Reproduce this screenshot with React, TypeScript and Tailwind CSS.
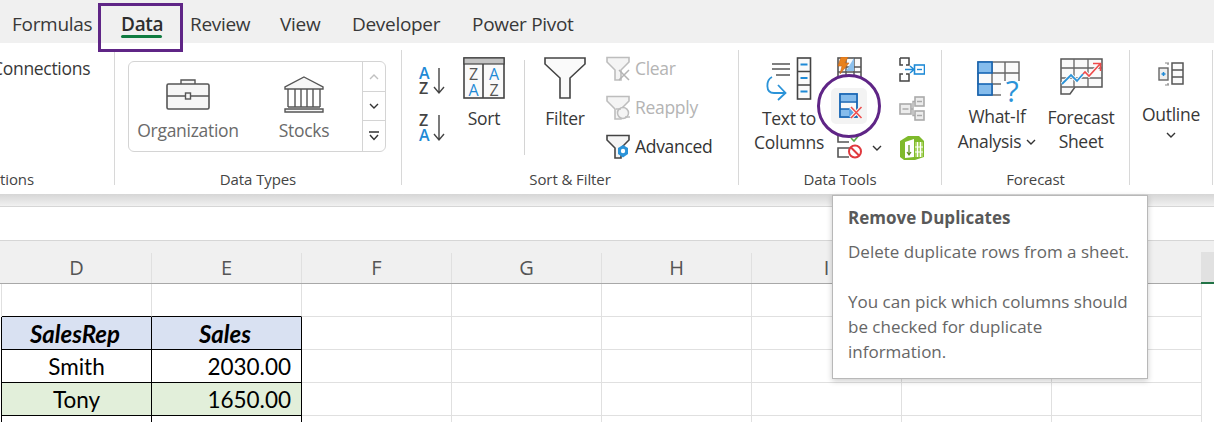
import React from "react";

const SmallFilter = ({ color = "#bdbdbd" }: { color?: string }) => (
  <path d="M1 1.5H23V6L15 14V24H9V14L1 6Z" fill="#f4f4f4" stroke={color} strokeWidth="1.6" />
);

const AZIcon = ({ flip = false }: { flip?: boolean }) => (
  <svg width="28" height="32" viewBox="0 0 28 32" className="block">
    <text x="1" y="14" fontFamily="Open Sans" fontWeight="600" fontSize="16" fill={flip ? "#444" : "#1f8ad6"}>{flip ? "Z" : "A"}</text>
    <text x="1" y="29" fontFamily="Open Sans" fontWeight="600" fontSize="16" fill={flip ? "#1f8ad6" : "#444"}>{flip ? "A" : "Z"}</text>
    <path d="M21 3V27M16 22L21 28L26 22" fill="none" stroke="#444" strokeWidth="1.4" />
  </svg>
);

const SortIcon = () => (
  <svg width="42" height="42" viewBox="0 0 42 42" className="block">
    <rect x="1" y="1" width="40" height="40" fill="#fafafa" stroke="#444" strokeWidth="1.6" />
    <rect x="1" y="1" width="40" height="6" fill="#c4c4c4" stroke="#444" strokeWidth="1.2" />
    <path d="M20 7V41" stroke="#444" strokeWidth="1.6" />
    <text x="10.5" y="23" textAnchor="middle" fontFamily="Open Sans" fontSize="16" fill="#555">Z</text>
    <text x="10.5" y="39" textAnchor="middle" fontFamily="Open Sans" fontSize="16" fill="#1f8ad6">A</text>
    <text x="31" y="23" textAnchor="middle" fontFamily="Open Sans" fontSize="16" fill="#1f8ad6">A</text>
    <text x="31" y="39" textAnchor="middle" fontFamily="Open Sans" fontSize="16" fill="#555">Z</text>
  </svg>
);

const FilterIcon = () => (
  <svg width="42" height="42" viewBox="0 0 42 42" className="block">
    <path d="M1 1H41V7L26 21V41H16V21L1 7Z" fill="#fafafa" stroke="#444" strokeWidth="1.6" />
  </svg>
);

const Small = ({ children, dim, icon }: { children: string; dim?: boolean; icon: React.ReactNode }) => (
  <div className="flex items-center h-[25px] gap-[5px]">
    <svg width="24" height="25" viewBox="0 0 24 25" className="block shrink-0">{icon}</svg>
    <span className={dim ? "text-[#b4b4b4] mt-[-1px]" : "text-[#333] mt-[-1px]"}>{children}</span>
  </div>
);

const TextToColumnsIcon = () => (
  <svg width="46" height="44" viewBox="0 0 46 44" className="block">
    <path d="M6 7H24M6 12H24M10 18H24" stroke="#555" strokeWidth="1.6" />
    <rect x="31.5" y="1" width="13" height="41" fill="#fafafa" stroke="#444" strokeWidth="1.6" />
    <path d="M31.5 14.5H44.5M31.5 28H44.5" stroke="#444" strokeWidth="1.6" />
    <path d="M34.5 7.5H41.5M34.5 21H41.5M34.5 34.5H41.5" stroke="#1f8ad6" strokeWidth="1.8" />
    <path d="M6 20C0 23 -1 36 8 36H19M12 28L19.5 36L12 43" fill="none" stroke="#2b93d8" strokeWidth="1.8" />
  </svg>
);

const FlashIcon = () => (
  <svg width="26" height="30" viewBox="0 0 26 30" className="block">
    <rect x="1" y="1" width="23" height="28" fill="#fafafa" stroke="#555" strokeWidth="1.6" />
    <path d="M9 10H24M1 15H24M1 22H24M9 1V29M17 1V29" stroke="#555" strokeWidth="1.4" />
    <path d="M9 14L17 1V14Z" fill="#8cc0ec" />
    <path d="M4 0H11L8 6H12L3 17L5 9H1Z" fill="#e8821e" stroke="#c8641a" strokeWidth="0.6" />
  </svg>
);

const RemoveDupIcon = () => (
  <svg width="24" height="26" viewBox="0 0 24 26" className="block">
    <rect x="1" y="1" width="17" height="23" fill="#fafafa" stroke="#1464b4" strokeWidth="1.8" />
    <rect x="2" y="2" width="15" height="6.5" fill="#85bcec" />
    <rect x="2" y="16" width="8" height="7" fill="#85bcec" />
    <path d="M1 9H18M1 16H10" stroke="#1464b4" strokeWidth="1.6" />
    <path d="M10 14.5L15 19.5L10 24.5Z" fill="#5ea6e6" />
    <path d="M12 14L22.5 25M22.5 14L12 25" stroke="#f3f3f3" strokeWidth="3.5" />
    <path d="M12 14L22.5 25M22.5 14L12 25" stroke="#ee4b4b" strokeWidth="1.5" />
  </svg>
);

const ValidationIcon = () => (
  <svg width="26" height="26" viewBox="0 0 26 26" className="block">
    <path d="M14 1H1V9H12M14 15H1V24H12" fill="none" stroke="#555" strokeWidth="1.6" />
    <path d="M14 5L17 8L23 1" fill="none" stroke="#5aa84a" strokeWidth="1.6" />
    <circle cx="18" cy="18.5" r="6" fill="#fff" stroke="#e0393e" strokeWidth="2" />
    <path d="M14 14.5L22 22.5" stroke="#e0393e" strokeWidth="2" />
  </svg>
);

const ConsolidateIcon = () => (
  <svg width="26" height="26" viewBox="0 0 26 26" className="block">
    <path d="M1 1H10V8H7M7 17H10V24H1V17H4M1 1V8H4" fill="none" stroke="#444" strokeWidth="1.5" />
    <path d="M6 12.5H14M11 9L15 12.5L11 16" fill="none" stroke="#1f8ad6" strokeWidth="1.5" />
    <rect x="15.5" y="8" width="10" height="9" fill="#fff" stroke="#1f8ad6" strokeWidth="1.6" />
    <path d="M18 12.5H23" stroke="#1f8ad6" strokeWidth="1.4" />
  </svg>
);

const RelationIcon = () => (
  <svg width="26" height="26" viewBox="0 0 26 26" className="block">
    <rect x="1" y="8" width="11" height="10" fill="#ececec" stroke="#aaa" strokeWidth="1.6" />
    <rect x="16" y="1" width="9" height="9" fill="#ececec" stroke="#aaa" strokeWidth="1.6" />
    <rect x="16" y="15" width="9" height="9" fill="#ececec" stroke="#aaa" strokeWidth="1.6" />
    <path d="M12 13H14V5.5H16M14 13V19.5H16M3.5 13H9.5M18 5.5H23M18 19.5H23" fill="none" stroke="#aaa" strokeWidth="1.4" />
  </svg>
);

const ModelIcon = () => (
  <svg width="26" height="26" viewBox="0 0 26 26" className="block">
    <path d="M1 6L9 1H20L25 6V22L16 25H5L1 22Z" fill="#7fba2c" />
    <path d="M6 7L15 4V22L6 23Z" fill="#fff" />
    <path d="M16 7H24V22H16Z" fill="#a9d45f" />
    <path d="M18.5 7V22M21.5 7V22M16 12H24M16 17H24" stroke="#fff" strokeWidth="1.2" />
    <path d="M10 10V19M8 17L10 20L12 17" fill="none" stroke="#5c8f1c" strokeWidth="1.2" />
  </svg>
);

const WhatIfIcon = () => (
  <svg width="46" height="42" viewBox="0 0 46 42" className="block">
    <rect x="1" y="1" width="41" height="33" fill="#fafafa" stroke="#666" strokeWidth="1.4" />
    <path d="M15 12H42M15 23H42M28 1V34M15 1V34" stroke="#666" strokeWidth="1.4" />
    <rect x="1" y="1" width="14" height="11" fill="#85bcec" stroke="#1464b4" strokeWidth="1.6" />
    <rect x="1" y="23" width="14" height="11" fill="#85bcec" stroke="#1464b4" strokeWidth="1.6" />
    <path d="M1 12V23" stroke="#1464b4" strokeWidth="1.6" />
    <path d="M24 20H46V42H24Z" fill="#fff" />
    <text x="35" y="41" textAnchor="middle" fontFamily="Open Sans" fontSize="30" fill="#2b93d8">?</text>
  </svg>
);

const ForecastIcon = () => (
  <svg width="43" height="39" viewBox="0 0 43 39" className="block">
    <path d="M1 1H42V29H15L10 36H1Z" fill="#fafafa" stroke="#555" strokeWidth="1.5" />
    <path d="M1 10H42M1 20H42M1 29H15M14 1V29M28 1V29" stroke="#666" strokeWidth="1.3" />
    <path d="M2 26L11 17L17 23L25 14L29 18L40 6" fill="none" stroke="#fafafa" strokeWidth="3.5" />
    <path d="M2 26L11 17L17 23L23 16" fill="none" stroke="#2b93d8" strokeWidth="1.8" />
    <path d="M23 16L25 14L29 18L40 6M33 5.5H40.5V13" fill="none" stroke="#ee4b4b" strokeWidth="1.6" />
  </svg>
);

const OutlineIcon = () => (
  <svg width="26" height="24" viewBox="0 0 26 24" className="block">
    <path d="M7 1H11M7 23H11M10 1V3M10 21V23" fill="none" stroke="#888" strokeWidth="1.2" />
    <rect x="1" y="6" width="9" height="12" fill="#ededed" stroke="#666" strokeWidth="1.4" />
    <path d="M3.5 12H7.5M5.5 10V14" stroke="#1f8ad6" strokeWidth="1.5" />
    <rect x="14" y="1" width="11" height="21" fill="#fafafa" stroke="#555" strokeWidth="1.5" />
    <path d="M14 8H25M14 15H25" stroke="#555" strokeWidth="1.3" />
  </svg>
);

const Chevron = ({ w = 10 }: { w?: number }) => (
  <svg width={w} height="6" viewBox="0 0 10 6" className="inline-block shrink-0">
    <path d="M1 1L5 5L9 1" fill="none" stroke="#333" strokeWidth="1.4" />
  </svg>
);

const Group = ({ w, label, labelClass, children }: { w: string; label: string; labelClass?: string; children: React.ReactNode }) => (
  <div className={`${w} shrink-0 h-[135px] border-r border-[#d8d8d8] flex flex-col`}>
    <div className="h-[120px] flex">{children}</div>
    <div className={`h-[15px] leading-[19px] text-[15px] tracking-[-0.1px] text-[#444] whitespace-nowrap ${labelClass ?? "text-center"}`}>{label}</div>
  </div>
);

const columns = ["D", "E", "F", "G", "H", "I", "", "", ""];

const Cell = ({ className, children }: { className: string; children?: React.ReactNode }) => (
  <div className={`w-[150px] shrink-0 h-[33px] ${className}`}>{children}</div>
);

const EmptyCells = () => (
  <>
    {[0, 1, 2, 3, 4, 5].map((i) => (
      <Cell key={i} className="border-r border-b border-[#e0e0e0]" />
    ))}
  </>
);

const DataRow = ({ name, value, bg }: { name: string; value: string; bg: string }) => (
  <div className="flex h-[33px] pl-px text-[22.5px] leading-[34px] text-black">
    <div className="w-px bg-black shrink-0" />
    <Cell className={`${bg} border-r border-b border-black text-center`}>{name}</Cell>
    <Cell className={`${bg} border-r border-b border-black text-right pr-[10px]`}>{value}</Cell>
    <EmptyCells />
  </div>
);

export default function App() {
  return (
    <div className="relative w-[1214px] h-[422px] overflow-hidden bg-white font-['Open_Sans',sans-serif] text-[#333]">
      {/* tabs */}
      <div className="h-[43px] bg-[#f0f0f0] flex text-[19px] leading-[24px] pt-[12px] tracking-[-0.3px] text-[#383838] whitespace-nowrap">
        <div className="ml-[12px] w-[80px]">Formulas</div>
        <div className="ml-[29px] w-[41px] font-semibold text-[#2e2e2e] relative h-[27px]">
          Data
          <div className="h-[3px] rounded-full bg-[#107c41] mt-[-1px]" />
        </div>
        <div className="ml-[28px] w-[61px]">Review</div>
        <div className="ml-[29px] w-[41px]">View</div>
        <div className="ml-[31px] w-[89px]">Developer</div>
        <div className="ml-[31px]">Power Pivot</div>
      </div>

      {/* ribbon */}
      <div className="h-[151px] bg-white pt-[7px] flex overflow-hidden text-[17.5px] leading-[24px] tracking-[-0.3px]">
        <Group w="w-[115px]" label="tions" labelClass="text-left">
          <div className="ml-[-8px] mt-[6px] whitespace-nowrap text-[#383838]">Connections</div>
        </Group>

        <Group w="w-[287px]" label="Data Types">
          <div className="ml-[13px] mt-[11px] w-[258px] h-[91px] border border-[#d4d4d4] rounded-[6px] flex">
            <div className="flex-1 flex text-[#6a6a6a]">
              <div className="w-[118px] flex flex-col items-center pt-[17px]">
                <svg width="44" height="31" viewBox="0 0 44 31" className="block">
                  <path d="M15 5V1H29V5" fill="#f6f6f6" stroke="#555" strokeWidth="1.4" />
                  <rect x="1" y="5" width="42" height="25" rx="1.5" fill="#f6f6f6" stroke="#555" strokeWidth="1.6" />
                  <path d="M1 17H19M25 17H43" stroke="#555" strokeWidth="1.4" />
                  <rect x="19.5" y="14" width="5" height="6" fill="#f6f6f6" stroke="#555" strokeWidth="1.4" />
                </svg>
                <div className="mt-[8px]">Organization</div>
              </div>
              <div className="w-[114px] flex flex-col items-center pt-[14px]">
                <svg width="42" height="37" viewBox="0 0 42 37" className="block">
                  <path d="M21 1L40 11V13H2V11Z" fill="#f6f6f6" stroke="#555" strokeWidth="1.4" />
                  <path d="M5 13V31M12 13V31M18 13V31M24 13V31M30 13V31M37 13V31M5 31H37M2 36V33H40V36Z" fill="#f6f6f6" stroke="#555" strokeWidth="1.4" />
                </svg>
                <div className="mt-[5px]">Stocks</div>
              </div>
            </div>
            <div className="w-[23px] border-l border-[#d4d4d4] flex flex-col">
              <div className="h-[30px] border-b border-[#d4d4d4] flex items-center justify-center">
                <svg width="10" height="6" viewBox="0 0 10 6"><path d="M1 5L5 1L9 5" fill="none" stroke="#c0c0c0" strokeWidth="1.4" /></svg>
              </div>
              <div className="h-[29px] border-b border-[#d4d4d4] flex items-center justify-center"><Chevron /></div>
              <div className="flex-1 flex items-center justify-center">
                <svg width="10" height="10" viewBox="0 0 10 10"><path d="M0 1H10M1 4L5 8.5L9 4" fill="none" stroke="#333" strokeWidth="1.4" /></svg>
              </div>
            </div>
          </div>
        </Group>

        <Group w="w-[337px]" label="Sort & Filter">
          <div className="ml-[16px] pt-[15px] flex flex-col gap-[15px]">
            <AZIcon />
            <AZIcon flip />
          </div>
          <div className="ml-[17px] pt-[7px] flex flex-col items-center w-[42px] text-[#383838]">
            <SortIcon />
            <div className="mt-[7px]">Sort</div>
          </div>
          <div className="ml-[19px] mt-[10px] w-px h-[95px] bg-[#d4d4d4]" />
          <div className="ml-[19px] pt-[7px] flex flex-col items-center w-[42px] text-[#383838]">
            <FilterIcon />
            <div className="mt-[7px]">Filter</div>
          </div>
          <div className="ml-[20px] pt-[6px] flex flex-col gap-[14px]">
            <Small dim icon={<><SmallFilter /><path d="M13 14L23 24M23 14L13 24" stroke="#b4b4b4" strokeWidth="1.5" /></>}>Clear</Small>
            <Small dim icon={<><SmallFilter /><circle cx="17" cy="18" r="5.5" fill="#f4f4f4" stroke="#bdbdbd" strokeWidth="1.5" /><path d="M10 14H15M24 22H19" stroke="#bdbdbd" strokeWidth="1.5" /></>}>Reapply</Small>
            <Small icon={<><SmallFilter color="#444" /><path d="M17 11L22 14V20L17 23.5L12 20V14Z" fill="#2b93d8" /><circle cx="17" cy="17" r="2.2" fill="#fff" /></>}>Advanced</Small>
          </div>
        </Group>

        <Group w="w-[203px]" label="Data Tools">
          <div className="ml-[15px] pt-[7px] flex flex-col items-center w-[70px] text-[#383838] text-center leading-[24px]">
            <TextToColumnsIcon />
            <div className="mt-[5px]">Text to</div>
            <div className="whitespace-nowrap">Columns</div>
          </div>
          <div className="ml-[13px] pt-[7px] flex flex-col w-[50px]">
            <FlashIcon />
            <div className="flex items-center mt-[46px]">
              <ValidationIcon />
              <div className="ml-[9px] mt-[3px] flex"><Chevron /></div>
            </div>
          </div>
          <div className="ml-[12px] pt-[7px] flex flex-col gap-[13px]">
            <ConsolidateIcon />
            <RelationIcon />
            <ModelIcon />
          </div>
        </Group>

        <Group w="w-[188px]" label="Forecast">
          <div className="ml-[11px] pt-[11px] flex flex-col items-center w-[88px] text-[#383838] leading-[25px]">
            <div className="ml-[5px]"><WhatIfIcon /></div>
            <div className="mt-[1px]">What-If</div>
            <div className="whitespace-nowrap flex items-center gap-[5px]">Analysis <Chevron /></div>
          </div>
          <div className="ml-[9px] pt-[8px] flex flex-col items-center w-[62px] text-[#383838] leading-[24px]">
            <ForecastIcon />
            <div className="mt-[8px]">Forecast</div>
            <div>Sheet</div>
          </div>
        </Group>

        <Group w="w-[83px]" label="">
          <div className="pt-[12px] ml-[11px] flex flex-col items-center w-[60px] text-[#383838]">
            <OutlineIcon />
            <div className="mt-[16px]">Outline</div>
            <div className="mt-[6px] flex"><Chevron /></div>
          </div>
        </Group>
      </div>

      {/* shadow strip below the ribbon */}
      <div className="h-[13px] bg-gradient-to-b from-[#d6d6d6] to-[#f1f1f1] border-b border-[#d6d6d6]" />

      {/* formula bar */}
      <div className="h-[34px] bg-white border-b border-[#d6d6d6]" />

      {/* column headers */}
      <div className="h-[43px] bg-[#f0f0f0] border-b border-[#a8a8a8] flex items-stretch relative pl-[2px] text-[20px] text-[#555]">
        {columns.map((c, i) => (
          <div key={i} className="w-[150px] shrink-0 flex items-end">
            <div className="flex-1 h-[30px] leading-[30px] text-center">{c}</div>
            <div className="w-px h-[30px] bg-[#e0e0e0]" />
          </div>
        ))}
        <div className="absolute left-[1201px] top-[11px] w-[13px] h-[32px] bg-[#e1e1e1] border-b-2 border-[#217346]" />
      </div>

      {/* sheet */}
      <div className="font-['Lato',sans-serif]">
        <div className="flex h-[33px] pl-px">
          <div className="w-px shrink-0 bg-[#e0e0e0]" />
          <Cell className="border-r border-b border-[#e0e0e0] !border-b-black" />
          <Cell className="border-r border-b border-[#e0e0e0] !border-b-black" />
          <EmptyCells />
        </div>
        <div className="flex h-[33px] pl-px text-[24px] leading-[33px] text-black font-bold italic">
          <div className="w-px bg-black shrink-0" />
          <Cell className="bg-[#d9e1f2] border-r border-b border-black text-center pr-[3px]">SalesRep</Cell>
          <Cell className="bg-[#d9e1f2] border-r border-b border-black text-center pr-[3px]">Sales</Cell>
          <EmptyCells />
        </div>
        <DataRow name="Smith" value="2030.00" bg="bg-white" />
        <DataRow name="Tony" value="1650.00" bg="bg-[#e2efda]" />
        <DataRow name="" value="" bg="bg-white" />
      </div>

      {/* annotation: tab highlight */}
      <div className="absolute left-[98px] top-[3px] w-[85px] h-[49px] border-[3px] border-[#5f2586]" />

      {/* annotation: circle over the ribbon, with the hovered Remove Duplicates button inside */}
      <div className="absolute left-[817px] top-[74px] w-[64px] h-[64px] rounded-full border-[3px] border-[#5f2586] bg-white flex items-center justify-center">
        <div className="w-[36px] h-[36px] rounded-[5px] bg-[#f3f3f3] flex items-center justify-center pl-[3px]">
          <RemoveDupIcon />
        </div>
      </div>

      {/* tooltip */}
      <div className="absolute left-[832px] top-[195px] w-[316px] h-[184px] bg-white border border-[#b8b8b8] shadow-[0_2px_6px_rgba(0,0,0,0.2)] pl-[15px] pt-[9px] text-[17px] leading-[25px] text-[#666]">
        <div className="font-bold text-[#595959]">Remove Duplicates</div>
        <div className="mt-[9px]">Delete duplicate rows from a sheet.</div>
        <div className="mt-[25px]">You can pick which columns should</div>
        <div>be checked for duplicate</div>
        <div>information.</div>
      </div>
    </div>
  );
}
